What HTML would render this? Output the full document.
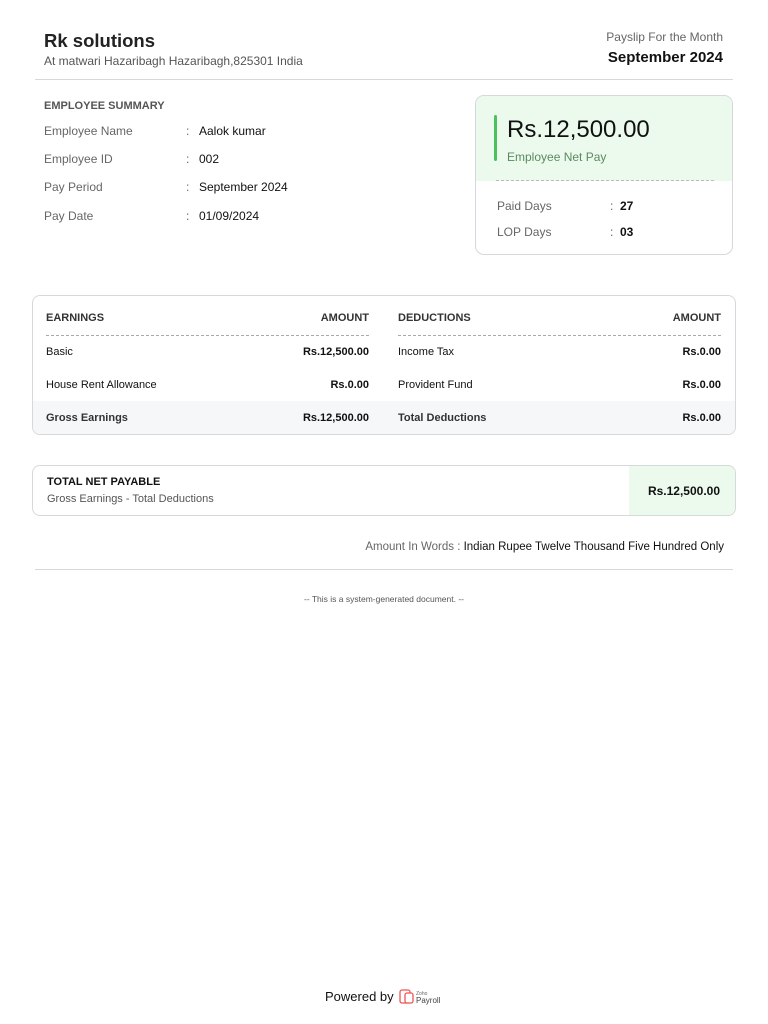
<!DOCTYPE html>
<html><head><meta charset="utf-8"><style>
*{margin:0;padding:0;box-sizing:border-box}
body{width:768px;height:1024px;background:#fff;font-family:"Liberation Sans","DejaVu Sans",sans-serif;color:#111;position:relative;overflow:hidden}
.a{position:absolute;white-space:nowrap}
.lbl{color:#666;font-size:12px}
.val{color:#111;font-size:12px}
.b{font-weight:bold}
</style></head><body>
<div class="a b" style="left:44px;top:30px;font-size:18.5px;color:#222">Rk solutions</div>
<div class="a" style="left:44px;top:54px;font-size:12px;color:#555">At matwari Hazaribagh Hazaribagh,825301 India</div>
<div class="a" style="right:45px;top:30px;font-size:12px;color:#666">Payslip For the Month</div>
<div class="a b" style="right:45px;top:49px;font-size:15px">September 2024</div>
<div class="a" style="left:35px;top:79px;width:698px;height:1px;background:#d5d8dc"></div>

<div class="a b" style="left:44px;top:100px;font-size:11px;color:#555">EMPLOYEE SUMMARY</div>
<div class="a lbl" style="left:44px;top:124px">Employee Name</div><div class="a lbl" style="left:186px;top:124px">:</div><div class="a val" style="left:199px;top:124px">Aalok kumar</div>
<div class="a lbl" style="left:44px;top:152px">Employee ID</div><div class="a lbl" style="left:186px;top:152px">:</div><div class="a val" style="left:199px;top:152px">002</div>
<div class="a lbl" style="left:44px;top:180px">Pay Period</div><div class="a lbl" style="left:186px;top:180px">:</div><div class="a val" style="left:199px;top:180px">September 2024</div>
<div class="a lbl" style="left:44px;top:209px">Pay Date</div><div class="a lbl" style="left:186px;top:209px">:</div><div class="a val" style="left:199px;top:209px">01/09/2024</div>

<div class="a" style="left:475px;top:95px;width:258px;height:160px;border:1px solid #d5d8dc;border-radius:9px;overflow:hidden">
 <div style="height:85px;background:#ecfaee;position:relative"><div style="position:absolute;left:20px;right:18px;bottom:0;border-top:1px dashed #bbb"></div></div>
</div>
<div class="a" style="left:494px;top:115px;width:3px;height:46px;background:#4cc25e;border-radius:2px"></div>
<div class="a" style="left:507px;top:116px;font-size:24px;color:#111">Rs.12,500.00</div>
<div class="a" style="left:507px;top:150px;font-size:12px;color:#5a8a5f">Employee Net Pay</div>
<div class="a lbl" style="left:497px;top:199px">Paid Days</div><div class="a lbl" style="left:610px;top:199px">:</div><div class="a val b" style="left:620px;top:199px">27</div>
<div class="a lbl" style="left:497px;top:225px">LOP Days</div><div class="a lbl" style="left:610px;top:225px">:</div><div class="a val b" style="left:620px;top:225px">03</div>

<div class="a" style="left:32px;top:295px;width:704px;height:140px;border:1px solid #d5d8dc;border-radius:8px;overflow:hidden">
 <div style="position:absolute;left:0;top:105px;width:704px;height:35px;background:#f6f7f9"></div>
</div>
<div class="a" style="left:46px;top:335px;width:323px;border-top:1px dashed #aaa"></div>
<div class="a" style="left:398px;top:335px;width:323px;border-top:1px dashed #aaa"></div>
<div class="a b" style="left:46px;top:312px;font-size:11px;color:#333">EARNINGS</div>
<div class="a b" style="right:399px;top:312px;font-size:11px;color:#333">AMOUNT</div>
<div class="a b" style="left:398px;top:312px;font-size:11px;color:#333">DEDUCTIONS</div>
<div class="a b" style="right:47px;top:312px;font-size:11px;color:#333">AMOUNT</div>
<div class="a" style="left:46px;top:346px;font-size:11px">Basic</div>
<div class="a b" style="right:399px;top:346px;font-size:11px">Rs.12,500.00</div>
<div class="a" style="left:398px;top:346px;font-size:11px">Income Tax</div>
<div class="a b" style="right:47px;top:346px;font-size:11px">Rs.0.00</div>
<div class="a" style="left:46px;top:379px;font-size:11px">House Rent Allowance</div>
<div class="a b" style="right:399px;top:379px;font-size:11px">Rs.0.00</div>
<div class="a" style="left:398px;top:379px;font-size:11px">Provident Fund</div>
<div class="a b" style="right:47px;top:379px;font-size:11px">Rs.0.00</div>
<div class="a b" style="left:46px;top:412px;font-size:11px;color:#333">Gross Earnings</div>
<div class="a b" style="right:399px;top:412px;font-size:11px">Rs.12,500.00</div>
<div class="a b" style="left:398px;top:412px;font-size:11px;color:#333">Total Deductions</div>
<div class="a b" style="right:47px;top:412px;font-size:11px">Rs.0.00</div>

<div class="a" style="left:32px;top:465px;width:704px;height:51px;border:1px solid #d5d8dc;border-radius:8px;overflow:hidden">
 <div style="position:absolute;right:0;top:0;width:106px;height:51px;background:#ecfaee"></div>
</div>
<div class="a b" style="left:47px;top:476px;font-size:11px">TOTAL NET PAYABLE</div>
<div class="a" style="left:47px;top:493px;font-size:11px;color:#555">Gross Earnings - Total Deductions</div>
<div class="a b" style="right:48px;top:484px;font-size:12px">Rs.12,500.00</div>

<div class="a" style="right:44px;top:541px;font-size:11.5px;color:#111"><span style="color:#666">Amount In Words : </span>Indian Rupee Twelve Thousand Five Hundred Only</div>
<div class="a" style="left:35px;top:569px;width:698px;height:1px;background:#d5d8dc"></div>
<div class="a" style="left:0;width:768px;text-align:center;top:594px;font-size:8.5px;color:#555">-- This is a system-generated document. --</div>

<div class="a" style="left:325px;top:989px;font-size:13px;color:#111">Powered by</div>
<svg class="a" style="left:399px;top:989px" width="16" height="16" viewBox="0 0 16 16"><rect x="1" y="1" width="10" height="13" rx="2" fill="none" stroke="#e55" stroke-width="1.3"/><rect x="6" y="4" width="8" height="10" rx="2" fill="#fff" stroke="#e55" stroke-width="1.3"/></svg>
<div class="a" style="left:416px;top:991px;font-size:5px;color:#666">Zoho</div>
<div class="a" style="left:416px;top:996px;font-size:8px;color:#444">Payroll</div>
</body></html>
